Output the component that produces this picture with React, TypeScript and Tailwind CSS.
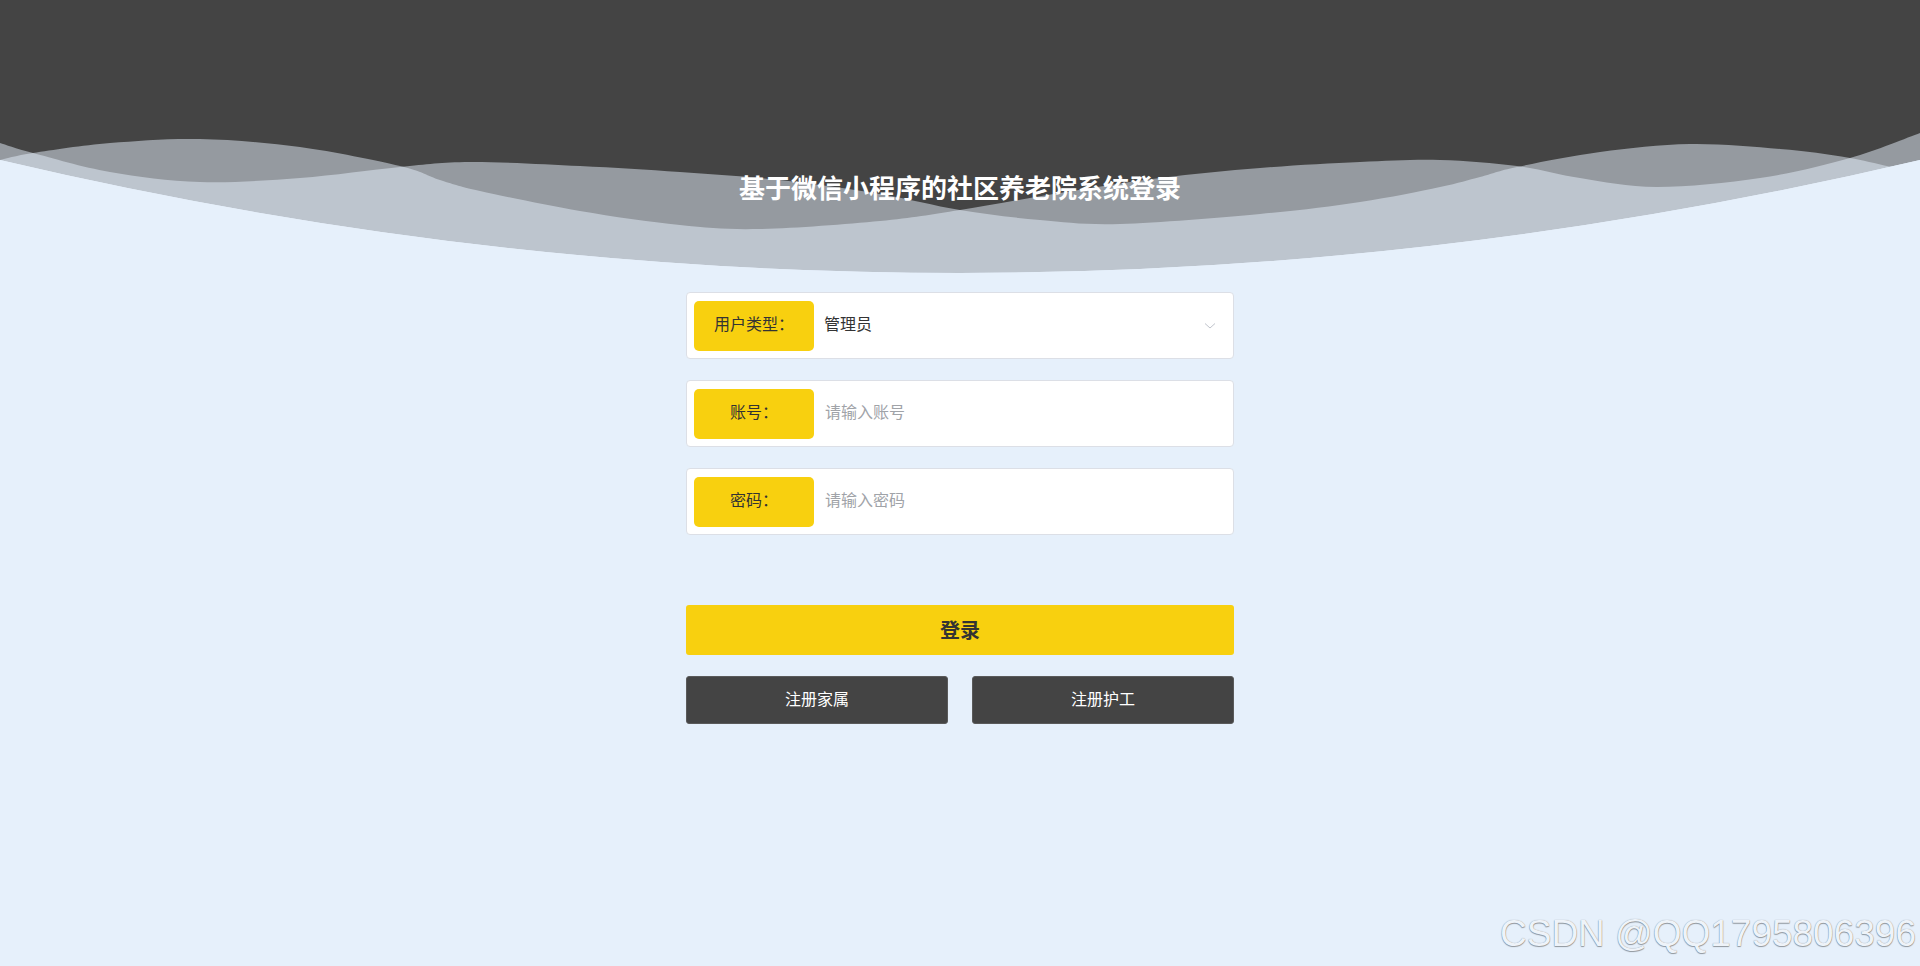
import React from "react";

type Pt = [number, number];

// smooth curve through points (catmull-rom -> cubic bezier)
function smooth(pts: Pt[]) {
  let d = `M${pts[0][0]},${pts[0][1]}`;
  for (let i = 0; i < pts.length - 1; i++) {
    const p0 = pts[i - 1] ?? pts[i];
    const p1 = pts[i];
    const p2 = pts[i + 1];
    const p3 = pts[i + 2] ?? p2;
    const c1x = p1[0] + (p2[0] - p0[0]) / 6;
    const c1y = p1[1] + (p2[1] - p0[1]) / 6;
    const c2x = p2[0] - (p3[0] - p1[0]) / 6;
    const c2y = p2[1] - (p3[1] - p1[1]) / 6;
    d += ` C${c1x.toFixed(1)},${c1y.toFixed(1)} ${c2x.toFixed(1)},${c2y.toFixed(1)} ${p2[0]},${p2[1]}`;
  }
  return d + " L1920,320 L0,320 Z";
}

const waveA: Pt[] = [
  [0, 160], [33, 153], [110, 143], [200, 139], [300, 147], [400, 166],
  [440, 180], [480, 191], [580, 211], [680, 225], [760, 229], [880, 221],
  [960, 210], [1060, 193], [1160, 178], [1260, 168], [1360, 162],
  [1440, 160], [1517, 166], [1580, 178], [1657, 187], [1760, 178],
  [1850, 158], [1920, 133],
];

const waveB: Pt[] = [
  [0, 143], [33, 153], [110, 172], [200, 182], [300, 178], [400, 167],
  [470, 162], [580, 166], [680, 172], [780, 180], [880, 194], [960, 210],
  [1040, 220], [1120, 224], [1260, 214], [1360, 202], [1440, 187],
  [1480, 177], [1517, 167], [1600, 152], [1690, 144], [1780, 149],
  [1850, 158], [1920, 174],
];

function Header() {
  return (
    <svg
      className="absolute left-0 top-0"
      width="1920"
      height="320"
      viewBox="0 0 1920 320"
    >
      <path d="M0,0 H1920 V160 Q960,386 0,160 Z" fill="#444444" />
      <path d={smooth(waveB)} fill="#e6f0fb" fillOpacity="0.5" />
      <path d={smooth(waveA)} fill="#e6f0fb" fillOpacity="0.5" />
      <path d="M0,160 Q960,386 1920,160 V320 H0 Z" fill="#e6f0fb" />
    </svg>
  );
}

function Label({ text }: { text: string }) {
  return (
    <div className="flex h-[50px] w-[120px] shrink-0 items-center justify-center rounded-[5px] bg-[#f8d00f] pb-[5px] text-[16px] text-[#333]">
      {text}
    </div>
  );
}

function Field({ label, placeholder, type = "text" }: { label: string; placeholder: string; type?: string }) {
  return (
    <div className="flex h-[67px] items-center rounded-[4px] border border-[#dcdfe6] bg-white px-[7px]">
      <Label text={label} />
      <input
        type={type}
        placeholder={placeholder}
        className="ml-[11px] h-full flex-1 bg-transparent pb-[5px] text-[16px] text-[#333] outline-none placeholder:text-[#a0a3a8]"
      />
    </div>
  );
}

export default function App() {
  return (
    <div className="relative h-[966px] overflow-hidden bg-[#e6f0fb] font-['Microsoft_YaHei','Noto_Sans_CJK_SC',sans-serif]">
      <Header />

      <div className="relative flex flex-col items-center">
        <h1 className="pt-[170px] text-[26px] font-bold leading-[34px] text-white">
          基于微信小程序的社区养老院系统登录
        </h1>

        <div className="mt-[88px] flex w-[548px] flex-col">
          <div className="flex h-[67px] items-center rounded-[4px] border border-[#dcdfe6] bg-white px-[7px]">
            <Label text="用户类型：" />
            <span className="ml-[10px] flex-1 pb-[5px] text-[16px] text-[#333]">管理员</span>
            <svg width="12" height="8" viewBox="0 0 12 8" className="mr-[10px]">
              <path d="M1 1.5 L6 6 L11 1.5" fill="none" stroke="#c0c4cc" strokeWidth="1" />
            </svg>
          </div>

          <div className="mt-[21px]">
            <Field label="账号：" placeholder="请输入账号" />
          </div>
          <div className="mt-[21px]">
            <Field label="密码：" placeholder="请输入密码" type="password" />
          </div>

          <button className="mt-[70px] h-[50px] rounded-[3px] bg-[#f8d00f] text-[20px] font-bold text-[#333]">
            登录
          </button>

          <div className="mt-[21px] grid grid-cols-2 gap-[24px]">
            <button className="h-[48px] rounded-[3px] border border-[#5a5a5a] bg-[#444] pb-[4px] text-[16px] text-white">
              注册家属
            </button>
            <button className="h-[48px] rounded-[3px] border border-[#5a5a5a] bg-[#444] pb-[4px] text-[16px] text-white">
              注册护工
            </button>
          </div>
        </div>
      </div>

      <div className="absolute bottom-[12px] right-[4px] font-['Liberation_Sans',Arial,sans-serif] text-[37px] leading-[40px] text-[#eef3f9] [text-shadow:0_1px_1px_rgba(0,0,0,0.35),0_0_1px_rgba(0,0,0,0.4)]">
        CSDN @QQ1795806396
      </div>
    </div>
  );
}
